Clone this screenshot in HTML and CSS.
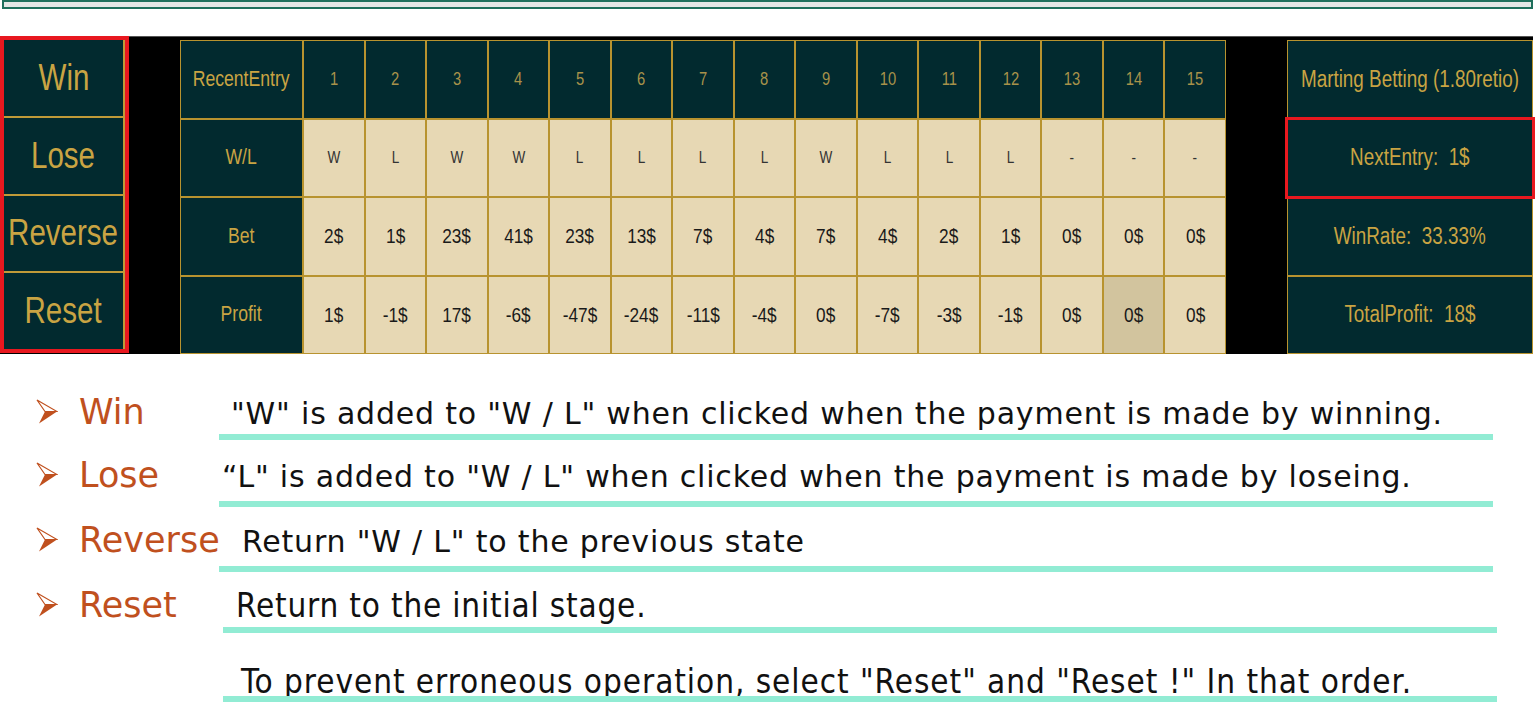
FILE: index.html
```html
<!DOCTYPE html>
<html lang="en">
<head>
<meta charset="utf-8">
<title>Marting Betting</title>
<link rel="stylesheet" href="styles.css">
</head>
<body>
<div class="topbar"></div>
<div class="band">
  <div class="controls">
    <div class="ctl"><span class="t">Win</span></div>
    <div class="ctl"><span class="t">Lose</span></div>
    <div class="ctl"><span class="t">Reverse</span></div>
    <div class="ctl"><span class="t">Reset</span></div>
  </div>
  <div class="grid">
    <div class="hd label"><span class="t">RecentEntry</span></div>
    <div class="hd"><span class="t">1</span></div><div class="hd"><span class="t">2</span></div><div class="hd"><span class="t">3</span></div><div class="hd"><span class="t">4</span></div><div class="hd"><span class="t">5</span></div>
    <div class="hd"><span class="t">6</span></div><div class="hd"><span class="t">7</span></div><div class="hd"><span class="t">8</span></div><div class="hd"><span class="t">9</span></div><div class="hd"><span class="t">10</span></div>
    <div class="hd"><span class="t">11</span></div><div class="hd"><span class="t">12</span></div><div class="hd"><span class="t">13</span></div><div class="hd"><span class="t">14</span></div><div class="hd"><span class="t">15</span></div>

    <div class="hd label"><span class="t">W/L</span></div>
    <div class="cell wl"><span class="t">W</span></div><div class="cell wl"><span class="t">L</span></div><div class="cell wl"><span class="t">W</span></div><div class="cell wl"><span class="t">W</span></div><div class="cell wl"><span class="t">L</span></div>
    <div class="cell wl"><span class="t">L</span></div><div class="cell wl"><span class="t">L</span></div><div class="cell wl"><span class="t">L</span></div><div class="cell wl"><span class="t">W</span></div><div class="cell wl"><span class="t">L</span></div>
    <div class="cell wl"><span class="t">L</span></div><div class="cell wl"><span class="t">L</span></div><div class="cell wl"><span class="t">-</span></div><div class="cell wl"><span class="t">-</span></div><div class="cell wl"><span class="t">-</span></div>

    <div class="hd label"><span class="t">Bet</span></div>
    <div class="cell"><span class="t">2$</span></div><div class="cell"><span class="t">1$</span></div><div class="cell"><span class="t">23$</span></div><div class="cell"><span class="t">41$</span></div><div class="cell"><span class="t">23$</span></div>
    <div class="cell"><span class="t">13$</span></div><div class="cell"><span class="t">7$</span></div><div class="cell"><span class="t">4$</span></div><div class="cell"><span class="t">7$</span></div><div class="cell"><span class="t">4$</span></div>
    <div class="cell"><span class="t">2$</span></div><div class="cell"><span class="t">1$</span></div><div class="cell"><span class="t">0$</span></div><div class="cell"><span class="t">0$</span></div><div class="cell"><span class="t">0$</span></div>

    <div class="hd label"><span class="t">Profit</span></div>
    <div class="cell"><span class="t">1$</span></div><div class="cell"><span class="t">-1$</span></div><div class="cell"><span class="t">17$</span></div><div class="cell"><span class="t">-6$</span></div><div class="cell"><span class="t">-47$</span></div>
    <div class="cell"><span class="t">-24$</span></div><div class="cell"><span class="t">-11$</span></div><div class="cell"><span class="t">-4$</span></div><div class="cell"><span class="t">0$</span></div><div class="cell"><span class="t">-7$</span></div>
    <div class="cell"><span class="t">-3$</span></div><div class="cell"><span class="t">-1$</span></div><div class="cell"><span class="t">0$</span></div><div class="cell hover"><span class="t">0$</span></div><div class="cell"><span class="t">0$</span></div>
  </div>
  <div class="stats">
    <div class="stat"><span class="t">Marting Betting (1.80retio)</span></div>
    <div class="stat marked"><span class="t">NextEntry:&nbsp; 1$</span></div>
    <div class="stat"><span class="t">WinRate:&nbsp; 33.33%</span></div>
    <div class="stat"><span class="t">TotalProfit:&nbsp; 18$</span></div>
  </div>
</div>

<ul class="legend">
  <li class="item item-win">
    <svg class="arrow" viewBox="0 0 22 25" width="22" height="25"><polygon points="1,1 21,12.5 9,12.5" fill="none" stroke="#c0501e" stroke-width="1.2"/><polygon points="9,12.5 21,12.5 3,24.5" fill="#c0501e"/></svg>
    <span class="name">Win</span>
    <p class="desc">"W" is added to "W / L" when clicked when the payment is made by winning.</p>
  </li>
  <li class="item item-lose">
    <svg class="arrow" viewBox="0 0 22 25" width="22" height="25"><polygon points="1,1 21,12.5 9,12.5" fill="none" stroke="#c0501e" stroke-width="1.2"/><polygon points="9,12.5 21,12.5 3,24.5" fill="#c0501e"/></svg>
    <span class="name">Lose</span>
    <p class="desc">“L" is added to "W / L" when clicked when the payment is made by loseing.</p>
  </li>
  <li class="item item-reverse">
    <svg class="arrow" viewBox="0 0 22 25" width="22" height="25"><polygon points="1,1 21,12.5 9,12.5" fill="none" stroke="#c0501e" stroke-width="1.2"/><polygon points="9,12.5 21,12.5 3,24.5" fill="#c0501e"/></svg>
    <span class="name">Reverse</span>
    <p class="desc">Return "W / L" to the previous state</p>
  </li>
  <li class="item item-reset">
    <svg class="arrow" viewBox="0 0 22 25" width="22" height="25"><polygon points="1,1 21,12.5 9,12.5" fill="none" stroke="#c0501e" stroke-width="1.2"/><polygon points="9,12.5 21,12.5 3,24.5" fill="#c0501e"/></svg>
    <span class="name">Reset</span>
    <p class="desc">Return to the initial stage.</p>
  </li>
  <li class="item item-note">
    <p class="desc">To prevent erroneous operation, select "Reset" and "Reset !" In that order.</p>
  </li>
</ul>
</body>
</html>
```
FILE: styles.css
```css
html, body {
  margin: 0;
  padding: 0;
  background: #ffffff;
}

body {
  width: 1536px;
  height: 723px;
  overflow: hidden;
  font-family: "DejaVu Sans", sans-serif;
}

.topbar {
  box-sizing: border-box;
  height: 9px;
  margin: 0 3px 0 2px;
  background: #e4e6e5;
  border: 2px solid #1f6f5c;
}

.band {
  display: flex;
  align-items: flex-start;
  width: 1533px;
  height: 318px;
  margin-top: 27px;
  background: #000000;
  border-top: 1px solid #555555;
  box-sizing: border-box;
  font-family: "Liberation Sans", Arial, sans-serif;
}

.t {
  display: inline-block;
  white-space: nowrap;
  transform: scaleX(0.82);
}

.controls {
  box-sizing: border-box;
  width: 129px;
  height: 317px;
  margin-top: -1px;
  border: 4px solid #e8181f;
  background: #022a2f;
  display: flex;
  flex-direction: column;
}

.ctl {
  flex: 1;
  display: flex;
  align-items: center;
  justify-content: center;
  color: #c9a443;
  font-size: 36px;
  border-bottom: 2px solid #c09a38;
  border-right: 2px solid #c09a38;
}

.ctl:last-child {
  border-bottom: none;
}

.grid {
  box-sizing: border-box;
  width: 1046px;
  height: 314px;
  margin: 3px 0 0 51px;
  padding: 1px;
  display: grid;
  grid-template-columns: 121px repeat(15, minmax(0, 1fr));
  grid-template-rows: repeat(4, 1fr);
  gap: 2px;
  background: #b8932f;
}

.hd {
  display: flex;
  align-items: center;
  justify-content: center;
  min-width: 0;
  background: #022a2f;
  color: #a8924a;
  font-size: 18px;
}

.hd.label {
  color: #c9a443;
  font-size: 21.5px;
}

.cell {
  display: flex;
  align-items: center;
  justify-content: center;
  min-width: 0;
  background: #e7d8b4;
  color: #1a1a1a;
  font-size: 21px;
}

.cell.wl {
  font-size: 16.5px;
  color: #333333;
}

.cell.hover {
  background: #d2c49e;
}

.stats {
  box-sizing: border-box;
  width: 246px;
  height: 314px;
  margin: 3px 0 0 61px;
  padding: 1px;
  display: grid;
  grid-template-columns: minmax(0, 1fr);
  grid-template-rows: repeat(4, 1fr);
  gap: 2px;
  background: #b8932f;
}

.stat {
  display: flex;
  align-items: center;
  justify-content: center;
  min-width: 0;
  background: #022a2f;
  color: #c9a443;
  font-size: 23px;
}

.stat.marked {
  outline: 3px solid #e8181f;
  outline-offset: 0;
  position: relative;
}

.legend {
  list-style: none;
  margin: 43px 0 0 0;
  padding: 0 0 0 36px;
}

.item {
  display: flex;
  align-items: baseline;
}

.arrow {
  flex: none;
  margin-top: -10px;
  margin-right: 21px;
}

.name {
  flex: none;
  width: 140px;
  color: #c0501e;
  font-size: 35px;
  line-height: 20px;
}

.desc {
  box-sizing: border-box;
  width: 1274px;
  margin: 0;
  height: 43px;
  line-height: 33px;
  border-bottom: 6px solid #92ecd4;
  color: #111111;
  font-size: 30px;
  letter-spacing: 0.8px;
  white-space: nowrap;
}

.item-win .desc { padding-left: 12px; line-height: 33px; }
.item-lose { margin-top: 24px; }
.item-lose .desc { padding-left: 3px; line-height: 25px; }
.item-reverse { margin-top: 22px; }
.item-reverse .desc { padding-left: 23px; line-height: 25px; }
.item-reset { margin-top: 18px; }
.item-reset .desc {
  padding-left: 13px;
  margin-left: 4px;
  line-height: 31px;
  font-family: "DejaVu Sans Condensed", "DejaVu Sans", sans-serif;
  font-size: 33px;
}
.item-note { margin-top: 26px; }
.item-note .desc {
  padding-left: 18px;
  margin-left: 187px;
  line-height: 45px;
  overflow: hidden;
  letter-spacing: 0.95px;
  font-family: "DejaVu Sans Condensed", "DejaVu Sans", sans-serif;
  font-size: 33px;
}
```
